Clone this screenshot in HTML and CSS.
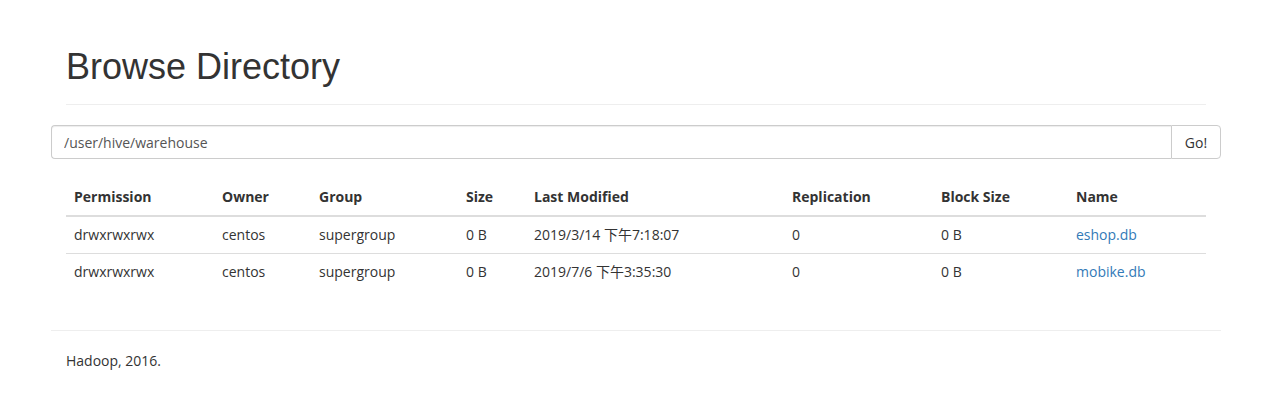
FILE: index.html
```html
<!DOCTYPE html>
<html lang="en">
<head>
<meta charset="utf-8">
<title>Browsing HDFS</title>
<link rel="stylesheet" href="styles.css">
</head>
<body>
<div class="container">
  <div class="page-header">
    <h1>Browse Directory</h1>
  </div>
  <form class="input-group">
    <input class="form-control" type="text" value="/user/hive/warehouse">
    <button class="btn" type="button">Go!</button>
  </form>
  <div class="table-wrap">
    <table class="table">
      <thead>
        <tr>
          <th class="c-perm">Permission</th>
          <th class="c-owner">Owner</th>
          <th class="c-group">Group</th>
          <th class="c-size">Size</th>
          <th class="c-mod">Last Modified</th>
          <th class="c-rep">Replication</th>
          <th class="c-bs">Block Size</th>
          <th>Name</th>
        </tr>
      </thead>
      <tbody>
        <tr>
          <td>drwxrwxrwx</td>
          <td>centos</td>
          <td>supergroup</td>
          <td>0 B</td>
          <td>2019/3/14 下午7:18:07</td>
          <td>0</td>
          <td>0 B</td>
          <td><a href="#">eshop.db</a></td>
        </tr>
        <tr>
          <td>drwxrwxrwx</td>
          <td>centos</td>
          <td>supergroup</td>
          <td>0 B</td>
          <td>2019/7/6 下午3:35:30</td>
          <td>0</td>
          <td>0 B</td>
          <td><a href="#">mobike.db</a></td>
        </tr>
      </tbody>
    </table>
  </div>
  <hr class="footer-rule">
  <p class="footer">Hadoop, 2016.</p>
</div>
</body>
</html>
```

FILE: styles.css
```css
* { box-sizing: border-box; }
html, body { margin: 0; padding: 0; background: #fff; }
body {
  font-family: "Open Sans", "Noto Sans CJK SC", sans-serif;
  font-size: 14px;
  line-height: 20px;
  color: #333;
}
.container {
  width: 1170px;
  margin-left: 51px;
}
.page-header {
  margin: 0 15px 20px;
  padding: 47px 0 9px;
  border-bottom: 1px solid #eee;
}
.page-header h1 {
  margin: 0 0 8px;
  font-family: "Liberation Sans", Arial, sans-serif;
  font-weight: 500;
  font-size: 36px;
  line-height: 40px;
  color: #333;
}
.input-group {
  display: flex;
  margin: 0;
  height: 34px;
}
.form-control {
  flex: 1;
  height: 34px;
  padding: 6px 12px;
  font-family: inherit;
  font-size: 14px;
  color: #555;
  border: 1px solid #ccc;
  border-right: 0;
  border-radius: 4px 0 0 4px;
  box-shadow: inset 0 1px 1px rgba(0,0,0,.075);
  outline: none;
  background: #fff;
}
.btn {
  width: 50px;
  height: 34px;
  padding: 6px 0;
  font-family: inherit;
  font-size: 14px;
  color: #333;
  background: #fff;
  border: 1px solid #ccc;
  border-radius: 0 4px 4px 0;
}
.table-wrap {
  padding: 20px 15px 0;
}
.table {
  width: 100%;
  border-collapse: collapse;
  border-spacing: 0;
  margin-bottom: 40px;
}
.table th, .table td {
  padding: 8px;
  text-align: left;
  line-height: 20px;
  vertical-align: top;
}
.table th {
  font-weight: 700;
  border-bottom: 2px solid #ddd;
}
.table td { border-top: 1px solid #ddd; }
.table tbody tr:first-child td { border-top: 0; }
.c-perm { width: 148px; }
.c-owner { width: 97px; }
.c-group { width: 147px; }
.c-size { width: 68px; }
.c-mod { width: 258px; }
.c-rep { width: 149px; }
.c-bs { width: 135px; }
a { color: #337ab7; text-decoration: none; }
.footer-rule {
  margin: 20px 0;
  border: 0;
  border-top: 1px solid #eee;
}
.footer {
  margin: 0 15px;
}
```
